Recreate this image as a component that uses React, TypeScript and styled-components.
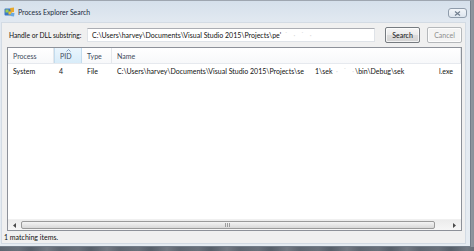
import React from "react";
import styled, { createGlobalStyle } from "styled-components";

const Global = createGlobalStyle`
  html, body { margin: 0; padding: 0; }
  body {
    width: 474px; height: 251px; overflow: hidden;
    background: #838a92;
    font-family: "Lato", "Open Sans", "Noto Sans", sans-serif;
  }
`;

const Screen = styled.div`
  width: 474px;
  height: 251px;
  overflow: hidden;
  background:
    linear-gradient(to bottom, transparent 0, transparent 247px, rgba(40,48,60,0.35) 247px),
    repeating-linear-gradient(90deg, #7a828c 0, #8d949d 18px, #6f7882 31px, #9aa0a8 47px, #7a828c 60px);
  display: flex;
  flex-direction: column;
`;

const Window = styled.div`
  width: 471px;
  height: 247px;
  box-sizing: border-box;
  border-top: 1px solid #9ea6b0;
  border-right: 1px solid #737d89;
  border-bottom: 1px solid #737d89;
  background: linear-gradient(to bottom, #d5e0eb 0, #e2e9f1 22px, #e6ecf2 100%);
  display: flex;
  flex-direction: column;
  padding: 0 4px 2px 1px;
`;

const TitleBar = styled.div`
  height: 21px;
  display: flex;
  align-items: center;
  padding-left: 3px;
  margin-right: -1px;
`;

const TitleText = styled.span`
  font-size: 6.9px;
  color: #1c2b3c;
  margin-left: 3px;
`;

const CloseButton = styled.div`
  margin-left: auto;
  width: 19px;
  height: 10px;
  box-sizing: border-box;
  border: 1px solid #8f9cab;
  border-radius: 3px;
  background: linear-gradient(to bottom, #f3f6f9, #dde5ee);
  display: flex;
  align-items: center;
  justify-content: center;
  margin-top: 3px;
`;

const Client = styled.div`
  flex: 1;
  background: #f0f0f0;
  border: 1px solid #d3dbe4;
  display: flex;
  flex-direction: column;
`;

const SearchRow = styled.div`
  display: flex;
  align-items: center;
  height: 16px;
  padding: 4px 0 0 7px;
`;

const Label = styled.span`
  width: 78px;
  font-size: 6.7px;
  color: #111;
  white-space: nowrap;
`;

const Input = styled.div`
  width: 288px;
  height: 14px;
  box-sizing: border-box;
  background: #fff;
  border: 1px solid #dfe3e8;
  border-top-color: #abadb3;
  font-size: 7px;
  color: #111;
  display: flex;
  align-items: center;
  padding-left: 4px;
  white-space: nowrap;
  overflow: hidden;
`;

const Button = styled.div<{ $disabled?: boolean; $gap: number }>`
  margin-left: ${(p) => p.$gap}px;
  width: 35px;
  height: 16px;
  box-sizing: border-box;
  border-radius: 2px;
  border: 1px solid ${(p) => (p.$disabled ? "#b5b8bb" : "#767b80")};
  background: ${(p) =>
    p.$disabled
      ? "#f4f4f4"
      : "linear-gradient(to bottom, #f6f6f6 0, #ebebeb 50%, #dcdcdc 51%, #d4d4d4 100%)"};
  color: ${(p) => (p.$disabled ? "#8d8d8d" : "#111")};
  font-size: 7px;
  display: flex;
  align-items: center;
  justify-content: center;
  box-shadow: inset 0 0 0 1px rgba(255,255,255,0.7);
`;

const List = styled.div`
  margin: 4px 3px 0 5px;
  height: 184px;
  box-sizing: border-box;
  border: 1px solid #8d9199;
  background: #fff;
  display: flex;
  flex-direction: column;
`;

const HeaderRow = styled.div`
  display: flex;
  height: 15px;
  border-bottom: 1px solid #e6e9ee;
  background: linear-gradient(to bottom, #ffffff, #f7f8fa);
`;

const HeaderCell = styled.div<{ $w?: number; $active?: boolean }>`
  position: relative;
  ${(p) => (p.$w ? `width: ${p.$w}px;` : "flex: 1;")}
  box-sizing: border-box;
  padding-left: 5px;
  display: flex;
  align-items: center;
  font-size: 7px;
  color: #3d4a5a;
  border-right: 1px solid ${(p) => (p.$active ? "#c3dcee" : "#e4e7eb")};
  ${(p) =>
    p.$active
      ? "background: linear-gradient(to bottom, #eaf5fd, #d8ecf9); border-left: 1px solid #c3dcee;"
      : ""}
`;

const SortMark = styled.svg`
  position: absolute;
  top: 1px;
  left: 50%;
  margin-left: -2px;
`;

const DataRow = styled.div`
  display: flex;
  height: 13px;
`;

const Cell = styled.div<{ $w?: number }>`
  ${(p) => (p.$w ? `width: ${p.$w}px;` : "flex: 1;")}
  box-sizing: border-box;
  padding-left: 5px;
  display: flex;
  align-items: center;
  font-size: 7px;
  color: #111;
  white-space: nowrap;
  overflow: hidden;
`;

const NameCell = styled(Cell)`
  position: relative;
`;

const Part = styled.span<{ $at: number }>`
  position: absolute;
  left: ${(p) => p.$at}px;
`;

const Faint = styled.span`
  color: #d9d9d9;
  letter-spacing: 2px;
`;

const Filler = styled.div`
  flex: 1;
`;

const ScrollBar = styled.div`
  height: 10px;
  display: flex;
  align-items: center;
  background: linear-gradient(to bottom, #ececec, #f6f6f6);
  border-top: 1px solid #f0f0f0;
`;

const Arrow = styled.div`
  width: 13px;
  height: 10px;
  display: flex;
  align-items: center;
  justify-content: center;
`;

const Thumb = styled.div`
  width: 414px;
  height: 8px;
  box-sizing: border-box;
  border: 1px solid #9a9a9a;
  border-radius: 2px;
  background: linear-gradient(to bottom, #f4f4f4, #e6e6e6 50%, #d8d8d8);
  display: flex;
  align-items: center;
  justify-content: center;
`;

const Track = styled.div`
  flex: 1;
`;

const Status = styled.div`
  flex: 1;
  display: flex;
  align-items: center;
  padding-left: 2px;
  font-size: 7px;
  color: #111;
`;

const AppIcon = () => (
  <svg width="11" height="10" viewBox="0 0 11 10">
    <rect x="0.5" y="1.5" width="7" height="7" rx="1" fill="#3a78c8" />
    <rect x="1.5" y="2.5" width="3" height="3" fill="#9fd04a" />
    <rect x="4.5" y="4.5" width="3" height="3" fill="#f0c42a" />
    <path d="M6 1 L10 0.5 L10 5 L7 5.5 Z" fill="#e8a82a" />
    <path d="M7 6 L10.5 6 L10 9.5 L6.5 9 Z" fill="#6aa8e0" />
  </svg>
);

export default function App() {
  return (
    <>
      <Global />
      <Screen>
        <Window>
          <TitleBar>
            <AppIcon />
            <TitleText>Process Explorer Search</TitleText>
            <CloseButton>
              <svg width="7" height="5" viewBox="0 0 7 5">
                <path d="M1 0.5 L6 4.5 M6 0.5 L1 4.5" stroke="#6f7d8d" strokeWidth="1.1" />
              </svg>
            </CloseButton>
          </TitleBar>
          <Client>
            <SearchRow>
              <Label>Handle or DLL substring:</Label>
              <Input>
                C:\Users\harvey\Documents\Visual Studio 2015\Projects\pe'
                <Faint>&nbsp;˙ · ˙ ·</Faint>
              </Input>
              <Button $gap={10}>Search</Button>
              <Button $gap={7} $disabled>
                Cancel
              </Button>
            </SearchRow>
            <List>
              <HeaderRow>
                <HeaderCell $w={46}>Process</HeaderCell>
                <HeaderCell $w={28} $active>
                  <SortMark width="5" height="3" viewBox="0 0 5 3">
                    <path d="M0.5 2.5 L2.5 0.5 L4.5 2.5" fill="none" stroke="#6b8bb0" strokeWidth="0.8" />
                  </SortMark>
                  PID
                </HeaderCell>
                <HeaderCell $w={30}>Type</HeaderCell>
                <HeaderCell>Name</HeaderCell>
              </HeaderRow>
              <DataRow>
                <Cell $w={46}>System</Cell>
                <Cell $w={28}>4</Cell>
                <Cell $w={30}>File</Cell>
                <NameCell>
                  C:\Users\harvey\Documents\Visual Studio 2015\Projects\se
                  <Part $at={203}>1\sek</Part>
                  <Part $at={224}>
                    <Faint>· ˙ ·</Faint>
                  </Part>
                  <Part $at={243}>\bin\Debug\sek</Part>
                  <Part $at={327}>l.exe</Part>
                </NameCell>
              </DataRow>
              <Filler />
              <ScrollBar>
                <Arrow>
                  <svg width="3" height="5" viewBox="0 0 3 5">
                    <path d="M3 0 L0 2.5 L3 5 Z" fill="#4a4a4a" />
                  </svg>
                </Arrow>
                <Thumb>
                  <svg width="6" height="4" viewBox="0 0 6 4">
                    <path d="M0.5 0 V4 M2.5 0 V4 M4.5 0 V4" stroke="#8a8a8a" strokeWidth="0.8" />
                  </svg>
                </Thumb>
                <Track />
                <Arrow>
                  <svg width="3" height="5" viewBox="0 0 3 5">
                    <path d="M0 0 L3 2.5 L0 5 Z" fill="#4a4a4a" />
                  </svg>
                </Arrow>
              </ScrollBar>
            </List>
            <Status>1 matching items.</Status>
          </Client>
        </Window>
      </Screen>
    </>
  );
}
